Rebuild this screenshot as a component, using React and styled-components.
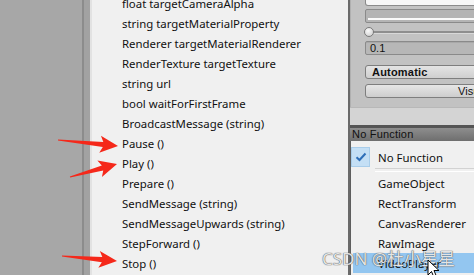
import React from 'react'
import styled, { createGlobalStyle } from 'styled-components'

const GlobalStyle = createGlobalStyle`
  html, body {
    margin: 0;
    padding: 0;
    background: #a7a7a7;
  }
  * { box-sizing: border-box; }
`

const leftItems = [
  'float targetCameraAlpha',
  'string targetMaterialProperty',
  'Renderer targetMaterialRenderer',
  'RenderTexture targetTexture',
  'string url',
  'bool waitForFirstFrame',
  'BroadcastMessage (string)',
  'Pause ()',
  'Play ()',
  'Prepare ()',
  'SendMessage (string)',
  'SendMessageUpwards (string)',
  'StepForward ()',
  'Stop ()',
]

const componentItems = ['GameObject', 'RectTransform', 'CanvasRenderer', 'RawImage', 'VideoPlayer']

// tail -> tip, in page pixels
const arrows = [
  { x0: 58, y0: 140, x1: 118, y1: 146 },
  { x0: 70, y0: 177, x1: 117, y1: 164 },
  { x0: 62, y0: 256, x1: 117, y1: 261 },
]

function Arrow({ x0, y0, x1, y1 }) {
  const len = Math.hypot(x1 - x0, y1 - y0)
  const angle = (Math.atan2(y1 - y0, x1 - x0) * 180) / Math.PI
  const pts = [
    [-len, -0.6], [-15, -2.6], [-18, -8.5], [0, 0], [-18, 8.5], [-15, 2.6], [-len, 0.6],
  ].map(p => p.join(',')).join(' ')
  return (
    <g transform={`translate(${x1} ${y1}) rotate(${angle})`}>
      <polygon points={pts} fill="#f5281a" />
    </g>
  )
}

function App() {
  return (
    <>
      <GlobalStyle />
      <Screen>
        <Gutter>
          <GutterLine />
        </Gutter>
        <Menu>
          <MenuList>
            {leftItems.map(item => (
              <MenuItem key={item}>{item}</MenuItem>
            ))}
          </MenuList>
        </Menu>
        <Inspector>
          <Fields>
            <TopField />
            <ColorField>
              <ColorBar />
              <ColorDot />
            </ColorField>
            <Slider>
              <SliderTrack />
              <Knob />
            </Slider>
            <NumberField>0.1</NumberField>
            <Popup>Automatic</Popup>
            <WideButton>Visualize</WideButton>
          </Fields>
          <Footer />
          <FunctionBar>No Function</FunctionBar>
          <Dropdown>
            <CheckRow>
              <CheckCell>
                <svg width="12" height="10" viewBox="0 0 12 10">
                  <path d="M1.5 5.2 L4.5 8 L10.5 1.5" fill="none" stroke="#2f6fb8" strokeWidth="2" />
                </svg>
              </CheckCell>
              <DropLabel>No Function</DropLabel>
            </CheckRow>
            <Separator />
            {componentItems.map(item => (
              <DropItem key={item} $active={item === 'VideoPlayer'}>
                <DropLabel>{item}</DropLabel>
              </DropItem>
            ))}
          </Dropdown>
        </Inspector>

        <ArrowLayer width="140" height="275" viewBox="0 0 140 275">
          {arrows.map((a, i) => <Arrow key={i} {...a} />)}
        </ArrowLayer>
        <Watermark>CSDN @杜小星星</Watermark>
        <Cursor width="14" height="20" viewBox="0 0 14 20">
          <path d="M1 1 L1 16 L4.5 12.5 L7 18.5 L9.5 17.5 L7 11.5 L12 11.5 Z" fill="#fff" stroke="#000" strokeWidth="1" />
        </Cursor>
      </Screen>
    </>
  )
}

const Screen = styled.div`
  position: relative;
  display: flex;
  width: 474px;
  height: 275px;
  overflow: hidden;
  background: #a7a7a7;
`

const Gutter = styled.div`
  width: 92px;
  flex-shrink: 0;
  display: flex;
  padding-left: 82px;
  background: #a7a7a7;
  border-right: 2px solid #e2e2e2;
`

const GutterLine = styled.div`
  width: 8px;
  border-left: 2px solid #8c8c8c;
  background: #a2a2a2;
`

const Menu = styled.div`
  width: 256px;
  flex-shrink: 0;
  background: #f0f0f0;
  overflow: hidden;
`

const MenuList = styled.div`
  display: flex;
  flex-direction: column;
  margin-top: -6px;
  padding-left: 30px;
`

const MenuItem = styled.div`
  height: 20px;
  line-height: 20px;
  font-family: "Noto Sans", "Open Sans", sans-serif;
  font-size: 11.4px;
  color: #111;
  white-space: nowrap;
`

const Inspector = styled.div`
  flex: 1;
  min-width: 0;
  display: flex;
  flex-direction: column;
  background: #c2c2c2;
  border-left: 2px solid #6a6a6a;
  overflow: hidden;
`

const Fields = styled.div`
  display: flex;
  flex-direction: column;
  flex-shrink: 0;
  padding-left: 14px;
  height: 107px;
  border-left: 1px solid #b0b0b0;
`

const TopField = styled.div`
  width: 130px;
  height: 6px;
  background: #f6f6f6;
  border: 1px solid #8a8a8a;
  border-top: none;
  border-radius: 0 0 3px 3px;
`

const ColorField = styled.div`
  width: 130px;
  height: 14px;
  margin-top: 3px;
  background: #b4b4b4;
  border: 1px solid #8a8a8a;
  border-radius: 2px;
  display: flex;
  align-items: flex-end;
  padding: 0 3px 2px 2px;
`

const ColorBar = styled.div`
  flex: 1;
  height: 2px;
  background: #fafafa;
`

const ColorDot = styled.div`
  width: 4px;
  height: 4px;
  margin-left: -12px;
  margin-right: 8px;
  background: #000;
`

const Slider = styled.div`
  position: relative;
  width: 130px;
  height: 10px;
  margin-top: 4px;
  display: flex;
  align-items: center;
`

const SliderTrack = styled.div`
  flex: 1;
  height: 3px;
  background: #8e8e8e;
  border-bottom: 1px solid #d8d8d8;
`

const Knob = styled.div`
  position: absolute;
  left: -1px;
  top: 0;
  width: 10px;
  height: 10px;
  border-radius: 50%;
  background: radial-gradient(circle at 40% 35%, #fafafa, #c8c8c8);
  border: 1px solid #7a7a7a;
`

const fieldText = `
  font-family: "Liberation Sans", Arial, sans-serif;
  font-size: 11px;
  color: #111;
  white-space: nowrap;
`

const NumberField = styled.div`
  ${fieldText}
  width: 130px;
  height: 14px;
  margin-top: 4px;
  padding-left: 4px;
  line-height: 12px;
  background: #b7b7b7;
  border: 1px solid #8a8a8a;
  border-radius: 2px;
  box-shadow: inset 0 1px 0 #a8a8a8;
`

const Popup = styled.div`
  ${fieldText}
  font-weight: bold;
  letter-spacing: 0.2px;
  width: 130px;
  height: 14px;
  margin-top: 10px;
  padding-left: 6px;
  line-height: 12px;
  background: linear-gradient(#e4e4e4, #cfcfcf);
  border: 1px solid #7e7e7e;
  border-radius: 3px;
`

const WideButton = styled.div`
  ${fieldText}
  width: 230px;
  height: 14px;
  margin-top: 5px;
  line-height: 12px;
  text-align: center;
  background: linear-gradient(#e6e6e6, #cdcdcd);
  border: 1px solid #7e7e7e;
  border-radius: 3px;
`

const Footer = styled.div`
  flex-shrink: 0;
  height: 21px;
  background: #d4d4d4;
  border-top: 1px solid #b8b8b8;
  border-bottom: 3px solid #555;
`

const FunctionBar = styled.div`
  ${fieldText}
  flex-shrink: 0;
  height: 13px;
  padding-left: 2px;
  line-height: 13px;
  background: linear-gradient(#8e8e8e, #6e6e6e);
  color: #111;
  letter-spacing: 0.2px;
`

const Dropdown = styled.div`
  flex: 1;
  display: flex;
  flex-direction: column;
  padding-top: 6px;
  background: #f0f0f0;
  border-left: 1px solid #5e5e5e;
`

const CheckRow = styled.div`
  display: flex;
  align-items: center;
  gap: 8px;
  height: 20px;
  flex-shrink: 0;
`

const CheckCell = styled.div`
  width: 19px;
  height: 20px;
  display: flex;
  align-items: center;
  justify-content: center;
  background: #c4dff5;
  border: 1px solid #a9cdea;
`

const DropLabel = styled.span`
  font-family: "Noto Sans", "Open Sans", sans-serif;
  font-size: 11.4px;
  color: #111;
  white-space: nowrap;
`

const Separator = styled.div`
  flex-shrink: 0;
  height: 6px;
  margin-left: 24px;
  display: flex;
  align-items: center;
  &::after {
    content: '';
    flex: 1;
    height: 2px;
    border-top: 1px solid #d2d2d2;
    border-bottom: 1px solid #fff;
  }
`

const DropItem = styled.div`
  display: flex;
  align-items: center;
  flex-shrink: 0;
  height: 20px;
  margin-left: 2px;
  padding-left: 25px;
  background: ${p => (p.$active ? '#93c6f0' : 'transparent')};
`

const ArrowLayer = styled.svg`
  position: absolute;
  left: 0;
  top: 0;
  pointer-events: none;
`

const Watermark = styled.div`
  position: absolute;
  left: 322px;
  top: 245px;
  font-family: "Noto Sans", "Noto Sans CJK SC", sans-serif;
  font-size: 17px;
  color: rgba(255, 255, 255, 0.85);
  text-shadow: 0 0 1px #555, 0 0 1px #555;
  white-space: nowrap;
  pointer-events: none;
`

const Cursor = styled.svg`
  position: absolute;
  left: 427px;
  top: 259px;
  pointer-events: none;
`

export default App
